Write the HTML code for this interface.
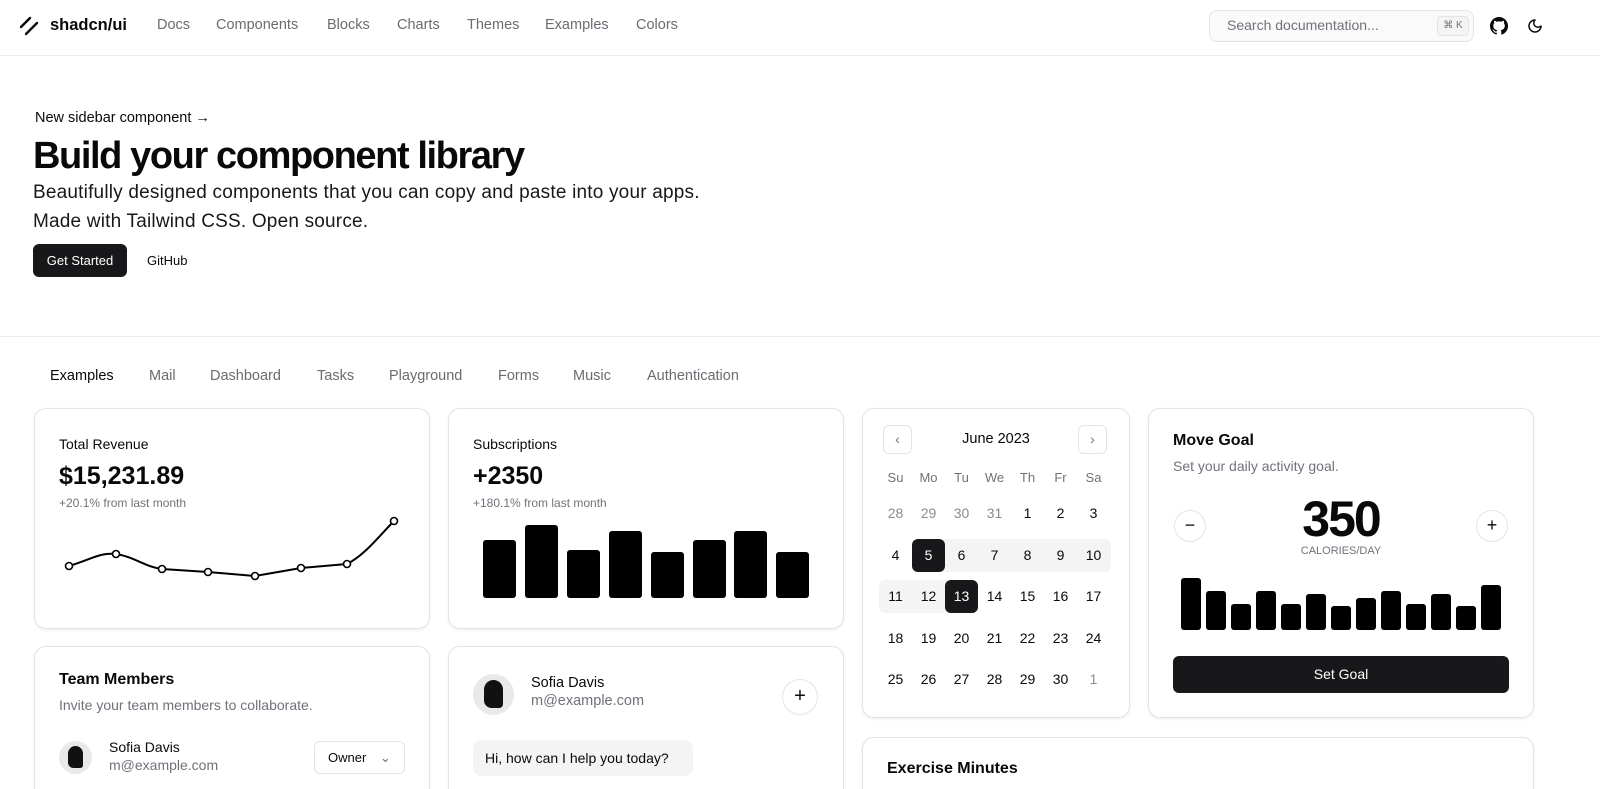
<!DOCTYPE html><html style="width:1600px;height:789px;overflow:hidden"><head><meta charset="utf-8"><style>
*{box-sizing:border-box;margin:0;padding:0}
body{width:1600px;height:789px;overflow:hidden;background:#fff;font-family:"Liberation Sans",sans-serif;color:#09090b;position:relative}
.a{position:absolute}
.nav{font-size:14.5px;color:#6b6b73;top:17px}
.card{position:absolute;border:1px solid #e4e4e7;border-radius:12px;background:#fff;box-shadow:0 1px 3px rgba(0,0,0,.08)}
.m{color:#71717a}
.bar{position:absolute;background:#000;border-radius:3px}
.d{position:absolute;width:33px;height:33px;line-height:33px;text-align:center;font-size:14px;border-radius:6px}
.circ{position:absolute;border:1px solid #e4e4e7;border-radius:50%;background:#fff;text-align:center}
</style></head><body>
<div class="a" style="left:0;top:55px;width:1600px;height:1px;background:#ececef"></div>
<svg class="a" style="left:18px;top:15px" width="22" height="22" viewBox="0 0 22 22"><path d="M3 12 L12 3 M8 19 L19 8" stroke="#09090b" stroke-width="2.4" stroke-linecap="round"/></svg>
<div class="a" style="left:50px;top:16px;font-size:16.5px;font-weight:bold">shadcn/ui</div>
<div class="a nav" style="left:157px">Docs</div>
<div class="a nav" style="left:216px">Components</div>
<div class="a nav" style="left:327px">Blocks</div>
<div class="a nav" style="left:397px">Charts</div>
<div class="a nav" style="left:467px">Themes</div>
<div class="a nav" style="left:545px">Examples</div>
<div class="a nav" style="left:636px">Colors</div>
<div class="a" style="left:1209px;top:10px;width:265px;height:32px;border:1px solid #e4e4e7;border-radius:8px;background:#fafafa"></div>
<div class="a m" style="left:1227px;top:17px;font-size:14px">Search documentation...</div>
<div class="a m" style="left:1437px;top:16px;width:32px;height:20px;border:1px solid #e4e4e7;border-radius:4px;background:#f4f4f5;font-size:10px;text-align:center;line-height:18px">⌘ K</div>
<svg class="a" style="left:1490px;top:17px" width="18" height="18" viewBox="0 0 16 16"><path fill="#09090b" d="M8 0C3.58 0 0 3.58 0 8c0 3.54 2.290 6.530 5.470 7.590.4.07.55-.17.55-.38v-1.330c-2.230.48-2.700-1.070-2.700-1.070-.36-.93-.89-1.170-.89-1.170-.73-.5.06-.49.06-.49.8.06 1.230.83 1.230.83.71 1.230 1.870.87 2.330.66.07-.52.28-.87.51-1.070-1.780-.2-3.640-.89-3.640-3.950 0-.87.31-1.590.82-2.150-.08-.2-.36-1.020.08-2.120 0 0 .67-.21 2.200.82a7.6 7.6 0 014 0c1.530-1.040 2.200-.82 2.200-.82.44 1.100.16 1.920.08 2.120.51.56.82 1.270.82 2.150 0 3.070-1.870 3.750-3.650 3.950.29.25.54.73.54 1.480v2.200c0 .21.15.46.55.38A8 8 0 0016 8c0-4.420-3.580-8-8-8z"/></svg>
<svg class="a" style="left:1527px;top:18px" width="16" height="16" viewBox="0 0 24 24"><path d="M12 3a6 6 0 009 9 9 9 0 11-9-9z" fill="none" stroke="#09090b" stroke-width="2.2" stroke-linejoin="round"/></svg>

<div class="a" style="left:35px;top:110px;font-size:14.5px;font-weight:500">New sidebar component →</div>
<div class="a" style="left:33px;top:135px;font-size:38px;font-weight:bold;letter-spacing:-1.4px">Build your component library</div>
<div class="a" style="left:33px;top:178px;font-size:19px;line-height:29px;color:#18181b;letter-spacing:0.2px">Beautifully designed components that you can copy and paste into your apps.<br>Made with Tailwind CSS. Open source.</div>
<div class="a" style="left:33px;top:244px;width:94px;height:33px;background:#18181b;border-radius:6px;color:#fff;font-size:13px;text-align:center;line-height:33px">Get Started</div>
<div class="a" style="left:147px;top:253px;font-size:13px">GitHub</div>
<div class="a" style="left:0;top:336px;width:1600px;height:1px;background:#ececef"></div>

<div class="a" style="left:50px;top:368px;font-size:14.5px">Examples</div>
<div class="a nav" style="left:149px;top:368px">Mail</div>
<div class="a nav" style="left:210px;top:368px">Dashboard</div>
<div class="a nav" style="left:317px;top:368px">Tasks</div>
<div class="a nav" style="left:389px;top:368px">Playground</div>
<div class="a nav" style="left:498px;top:368px">Forms</div>
<div class="a nav" style="left:573px;top:368px">Music</div>
<div class="a nav" style="left:647px;top:368px">Authentication</div>

<div class="card" style="left:34px;top:408px;width:396px;height:221px"></div>
<div class="a" style="left:59px;top:436px;font-size:14px">Total Revenue</div>
<div class="a" style="left:59px;top:462px;font-size:25px;font-weight:bold">$15,231.89</div>
<div class="a m" style="left:59px;top:496px;font-size:12px">+20.1% from last month</div>
<svg class="a" style="left:0;top:0" width="430" height="629"><path d="M69 566 C90 560 100 552 116 554 C135 557 145 567 162 569 L208 572 L255 576 L301 568 L347 564 C365 555 380 535 394 521" fill="none" stroke="#000" stroke-width="2"/><g fill="#fff" stroke="#000" stroke-width="1.6"><circle cx="69" cy="566" r="3.5"/><circle cx="116" cy="554" r="3.5"/><circle cx="162" cy="569" r="3.5"/><circle cx="208" cy="572" r="3.5"/><circle cx="255" cy="576" r="3.5"/><circle cx="301" cy="568" r="3.5"/><circle cx="347" cy="564" r="3.5"/><circle cx="394" cy="521" r="3.5"/></g></svg>

<div class="card" style="left:448px;top:408px;width:396px;height:221px"></div>
<div class="a" style="left:473px;top:436px;font-size:14px">Subscriptions</div>
<div class="a" style="left:473px;top:462px;font-size:25px;font-weight:bold">+2350</div>
<div class="a m" style="left:473px;top:496px;font-size:12px">+180.1% from last month</div>
<div class="bar" style="left:483px;top:540px;width:33px;height:58px"></div>
<div class="bar" style="left:525px;top:525px;width:33px;height:73px"></div>
<div class="bar" style="left:567px;top:550px;width:33px;height:48px"></div>
<div class="bar" style="left:609px;top:531px;width:33px;height:67px"></div>
<div class="bar" style="left:651px;top:552px;width:33px;height:46px"></div>
<div class="bar" style="left:693px;top:540px;width:33px;height:58px"></div>
<div class="bar" style="left:734px;top:531px;width:33px;height:67px"></div>
<div class="bar" style="left:776px;top:552px;width:33px;height:46px"></div>

<div class="card" style="left:862px;top:408px;width:268px;height:310px"></div>
<div class="a" style="left:883px;top:425px;width:29px;height:29px;border:1px solid #e4e4e7;border-radius:6px;text-align:center;line-height:26px;color:#71717a;font-size:14px">‹</div>
<div class="a" style="left:1078px;top:425px;width:29px;height:29px;border:1px solid #e4e4e7;border-radius:6px;text-align:center;line-height:26px;color:#71717a;font-size:14px">›</div>
<div class="a" style="left:862px;top:431px;width:268px;text-align:center;font-size:14.5px;font-weight:500">June 2023</div>
<div class="a" style="left:913px;top:539px;width:198px;height:33px;background:#f4f4f5;border-radius:6px"></div>
<div class="a" style="left:879px;top:580px;width:99px;height:33px;background:#f4f4f5;border-radius:6px"></div>
<div id="cal"></div>

<div class="card" style="left:1148px;top:408px;width:386px;height:310px"></div>
<div class="a" style="left:1173px;top:432px;font-size:16px;font-weight:600">Move Goal</div>
<div class="a m" style="left:1173px;top:458px;font-size:14px">Set your daily activity goal.</div>
<div class="circ" style="left:1174px;top:510px;width:32px;height:32px;line-height:29px;font-size:18px">−</div>
<div class="circ" style="left:1476px;top:510px;width:32px;height:32px;line-height:29px;font-size:18px">+</div>
<div class="a" style="left:1148px;top:490px;width:386px;text-align:center;font-size:50px;font-weight:bold;letter-spacing:-2px">350</div>
<div class="a m" style="left:1148px;top:545px;width:386px;text-align:center;font-size:11px">CALORIES/DAY</div>
<div id="mg"></div>
<div class="a" style="left:1173px;top:656px;width:336px;height:37px;background:#18181b;border-radius:6px;color:#fff;text-align:center;line-height:37px;font-size:14px">Set Goal</div>

<div class="card" style="left:34px;top:646px;width:396px;height:160px"></div>
<div class="a" style="left:59px;top:671px;font-size:16px;font-weight:600">Team Members</div>
<div class="a m" style="left:59px;top:697px;font-size:14px">Invite your team members to collaborate.</div>
<div class="a" style="left:59px;top:741px;width:33px;height:33px;border-radius:50%;background:#e9e9eb"><div style="position:absolute;left:9px;top:5px;width:15px;height:22px;background:#111;border-radius:8px 8px 3px 6px"></div></div>
<div class="a" style="left:109px;top:739px;font-size:14px;font-weight:500">Sofia Davis</div>
<div class="a m" style="left:109px;top:757px;font-size:14px">m@example.com</div>
<div class="a" style="left:314px;top:741px;width:91px;height:33px;border:1px solid #e4e4e7;border-radius:6px;font-size:13px;line-height:31px;padding-left:13px">Owner <span style="color:#71717a;margin-left:10px">⌄</span></div>

<div class="card" style="left:448px;top:646px;width:396px;height:160px"></div>
<div class="a" style="left:473px;top:674px;width:41px;height:41px;border-radius:50%;background:#e9e9eb"><div style="position:absolute;left:11px;top:6px;width:19px;height:28px;background:#111;border-radius:10px 10px 4px 8px"></div></div>
<div class="a" style="left:531px;top:675px;font-size:14.5px;font-weight:500">Sofia Davis</div>
<div class="a m" style="left:531px;top:693px;font-size:14.5px">m@example.com</div>
<div class="circ" style="left:782px;top:679px;width:36px;height:36px;line-height:33px;font-size:20px">+</div>
<div class="a" style="left:473px;top:740px;width:220px;height:36px;background:#f4f4f5;border-radius:8px;font-size:14px;line-height:36px;padding-left:12px">Hi, how can I help you today?</div>

<div class="card" style="left:862px;top:737px;width:672px;height:70px"></div>
<div class="a" style="left:887px;top:760px;font-size:16px;font-weight:600">Exercise Minutes</div>

<script>
var c=document.getElementById('cal'),h='';
var xs=[879,912,945,978,1011,1044,1077];
['Su','Mo','Tu','We','Th','Fr','Sa'].forEach(function(t,i){h+='<div class="d" style="left:'+xs[i]+'px;top:461px;color:#71717a;font-size:13px">'+t+'</div>'});
var rows=[[28,29,30,31,1,2,3],[4,5,6,7,8,9,10],[11,12,13,14,15,16,17],[18,19,20,21,22,23,24],[25,26,27,28,29,30,1]];
var ys=[497,539,580,622,663];
rows.forEach(function(r,ri){r.forEach(function(n,i){var st='';
if((ri==0&&i<4)||(ri==4&&i==6))st='color:#8a8a92;';
if((ri==1&&i==1)||(ri==2&&i==2))st='background:#18181b;color:#fff;';
h+='<div class="d" style="left:'+xs[i]+'px;top:'+ys[ri]+'px;'+st+'">'+n+'</div>'})});
c.innerHTML=h;
var tops=[578,591,604,591,604,594,606,598,591,604,594,606,585],g='';
tops.forEach(function(t,i){g+='<div class="bar" style="left:'+(1181+i*25)+'px;top:'+t+'px;width:20px;height:'+(630-t)+'px"></div>'});
document.getElementById('mg').innerHTML=g;
</script>
</body></html>
